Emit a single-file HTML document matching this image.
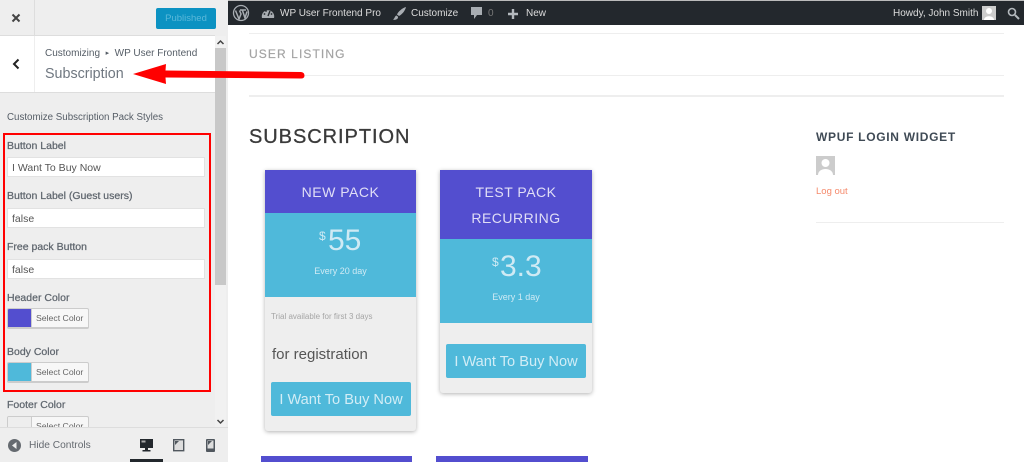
<!DOCTYPE html>
<html><head><meta charset="utf-8"><style>
html,body{margin:0;padding:0}
body{width:1024px;height:462px;overflow:hidden;background:#fff;position:relative;font-family:"Liberation Sans",sans-serif}
.a{position:absolute;white-space:nowrap}
.lbl{left:7px;font-size:10.5px;color:#5f666e;-webkit-text-stroke:.25px #5f666e}
.inp{left:7px;width:196px;height:18px;background:#fff;border:1px solid #e2e2e2;font-size:10.5px;line-height:20px;color:#555;text-indent:4px}
.sw{left:7px;width:80px;height:18px;background:#f7f7f7;border:1px solid #ccc;border-bottom-width:2px;border-radius:2px;font-size:8.7px;line-height:18px;color:#666;overflow:hidden}
.sw i{position:absolute;left:0;top:0;width:23px;height:18px;border-right:1px solid #ccc}
.sw span{position:absolute;left:28px}
.card{position:absolute;background:#eee;border-radius:0 0 3px 3px;box-shadow:0 1px 4px rgba(0,0,0,.3)}
.hd{position:absolute;left:0;right:0;top:0;background:#534ecf;color:#e0def6;text-align:center;font-size:14px;letter-spacing:.5px;line-height:26px}
.bd{position:absolute;left:0;right:0;background:#4fb9da;color:#cfeaf4;text-align:center}
.btn{position:absolute;background:#4fb9da;color:#d2edf6;border-radius:2px;text-align:center;font-size:14.6px;line-height:36px;width:140px;height:34px}
.line{position:absolute;background:#eee;height:1px}
</style></head><body>
<!-- main -->
<div class="a" style="left:228px;top:0;width:796px;height:1px;background:#bbb"></div>
<div class="a" style="left:228px;top:1px;width:796px;height:24px;background:#23282d"></div>
<svg class="a" style="left:232px;top:4px" width="18" height="18" viewBox="0 0 18 18"><circle cx="9" cy="9" r="7.5" fill="none" stroke="#a8adb2" stroke-width="1.3"/><path d="M3.5 6.5 7 15l2-5-1.5-3.5M8 6h6M10.5 6.500 13 14l2-6.500" fill="none" stroke="#a8adb2" stroke-width="1.500"/></svg>
<svg class="a" style="left:261px;top:7px" width="14" height="13" viewBox="0 0 14 13"><path d="M1 11A6.200 6.200 0 1 1 13 11Z" fill="#a8adb2"/><path d="M7 9 9 4" stroke="#23282d" stroke-width="1.400"/><circle cx="3.500" cy="7" r=".9" fill="#23282d"/><circle cx="5" cy="4" r=".9" fill="#23282d"/><circle cx="10.500" cy="7" r=".9" fill="#23282d"/></svg>
<div class="a" style="left:280px;top:7px;font-size:10px;color:#ddd;line-height:14px">WP User Frontend Pro</div>
<svg class="a" style="left:392px;top:6px" width="15" height="15" viewBox="0 0 15 15"><path d="M14 1C10 2 6 6 5 8.500L7 10C10 8.500 13 5 14 1ZM4.500 9.500C2.500 10 3 12.500 1 13.500 3.500 14.500 6.500 13 6 10.800Z" fill="#a8adb2"/></svg>
<div class="a" style="left:411px;top:7px;font-size:10px;color:#ddd;line-height:14px">Customize</div>
<svg class="a" style="left:470px;top:6px" width="13" height="14" viewBox="0 0 13 14"><path d="M1 1H12V9H7L4 13V9H1Z" fill="#a8adb2"/></svg>
<div class="a" style="left:488px;top:7px;font-size:10px;color:#777;line-height:14px">0</div>
<svg class="a" style="left:507px;top:8px" width="12" height="12" viewBox="0 0 12 12"><path d="M6 1V11M1 6H11" stroke="#b4b9be" stroke-width="2.400"/></svg>
<div class="a" style="left:526px;top:7px;font-size:10px;color:#ddd;line-height:14px">New</div>
<div class="a" style="left:893px;top:7px;font-size:10px;color:#ddd;line-height:14px">Howdy, John Smith</div>
<svg class="a" style="left:982px;top:6px" width="14" height="14" viewBox="0 0 14 14"><rect width="14" height="14" fill="#ccc"/><circle cx="7" cy="5" r="3" fill="#fff"/><path d="M2 14C2 9 12 9 12 14Z" fill="#fff"/></svg>
<svg class="a" style="left:1007px;top:7px" width="13" height="13" viewBox="0 0 13 13"><circle cx="5" cy="5" r="3.500" fill="none" stroke="#b4b9be" stroke-width="1.600"/><path d="M8 8 12 12" stroke="#b4b9be" stroke-width="2"/></svg>

<div class="line" style="left:249px;top:33px;width:755px"></div>
<div class="a" style="left:249px;top:47px;font-size:12px;line-height:14px;letter-spacing:1.100px;color:#a3a3a3;-webkit-text-stroke:.2px #a3a3a3">USER LISTING</div>
<div class="line" style="left:249px;top:75px;width:755px"></div>
<div class="line" style="left:249px;top:95px;width:755px;height:2px"></div>
<div class="a" style="left:249px;top:123px;font-size:20px;line-height:28px;letter-spacing:.95px;color:#3a3a3a;-webkit-text-stroke:.3px #3a3a3a">SUBSCRIPTION</div>

<div class="card" style="left:265px;top:170px;width:151px;height:261px">
 <div class="hd" style="height:43px;line-height:44px">NEW PACK</div>
 <div class="bd" style="top:43px;height:84px">
  <div class="a" style="left:54px;top:16px;font-size:12px">$</div>
  <div class="a" style="left:63px;top:10px;font-size:30px;line-height:36px">55</div>
  <div class="a" style="left:0;right:0;top:52px;font-size:9px;line-height:12px">Every 20 day</div>
 </div>
 <div class="a" style="left:6px;top:141px;font-size:8px;line-height:11px;color:#a5a5a5">Trial available for first 3 days</div>
 <div class="a" style="left:7px;top:175px;font-size:15px;line-height:19px;color:#555">for registration</div>
 <div class="btn" style="left:6px;top:212px">I Want To Buy Now</div>
</div>
<div class="card" style="left:440px;top:170px;width:152px;height:223px">
 <div class="hd" style="padding-top:9px;height:60px">TEST PACK<br>RECURRING</div>
 <div class="bd" style="top:69px;height:84px">
  <div class="a" style="left:52px;top:16px;font-size:12px">$</div>
  <div class="a" style="left:60px;top:10px;font-size:30px;line-height:36px">3.3</div>
  <div class="a" style="left:0;right:0;top:52px;font-size:9px;line-height:12px">Every 1 day</div>
 </div>
 <div class="btn" style="left:6px;top:174px">I Want To Buy Now</div>
</div>
<div class="a" style="left:261px;top:456px;width:151px;height:6px;background:#534ecf"></div>
<div class="a" style="left:436px;top:456px;width:152px;height:6px;background:#534ecf"></div>

<div class="a" style="left:816px;top:130px;font-size:12px;line-height:14px;letter-spacing:.7px;font-weight:bold;color:#3f4a55">WPUF LOGIN WIDGET</div>
<svg class="a" style="left:816px;top:156px" width="19" height="19" viewBox="0 0 19 19"><rect width="19" height="19" fill="#ccc"/><circle cx="9.500" cy="7" r="4" fill="#fff"/><path d="M2 19C2 11 17 11 17 19Z" fill="#fff"/></svg>
<div class="a" style="left:816px;top:185px;font-size:9.500px;line-height:14px;color:#f58a6c">Log out</div>
<div class="line" style="left:816px;top:222px;width:188px"></div>

<!-- panel -->
<div class="a" style="left:0;top:0;width:228px;height:462px;background:#eee"></div>
<div class="a" style="left:0;top:35px;width:215px;height:1px;background:#ddd"></div>
<div class="a" style="left:34px;top:0;width:1px;height:35px;background:#ddd"></div>
<svg class="a" style="left:11px;top:13px" width="10" height="10" viewBox="0 0 10 10"><path d="M1.500 1.500 8.500 8.500M8.500 1.500 1.500 8.500" stroke="#444" stroke-width="2"/></svg>
<div class="a" style="left:156px;top:8px;width:60px;height:21px;background:#0c92c2;border-radius:2px;color:#5ab8da;font-size:9.500px;line-height:21px;text-align:center">Published</div>
<div class="a" style="left:0;top:36px;width:215px;height:56px;background:#fff;border-bottom:1px solid #ddd"></div>
<div class="a" style="left:34px;top:36px;width:1px;height:56px;background:#eee"></div>
<svg class="a" style="left:11px;top:58px" width="10" height="12" viewBox="0 0 10 12"><path d="M7.500 1.500 3 6 7.500 10.500" fill="none" stroke="#222" stroke-width="2"/></svg>
<div class="a" style="left:45px;top:47px;font-size:10px;line-height:14px;color:#555d66">Customizing &nbsp;<span style="font-size:7px;vertical-align:1px">▸</span>&nbsp; WP User Frontend</div>
<div class="a" style="left:45px;top:65px;font-size:14.300px;line-height:19px;color:#6f7780">Subscription</div>
<div class="a" style="left:7px;top:111px;font-size:9.750px;line-height:14px;color:#555d66">Customize Subscription Pack Styles</div>

<div class="a lbl" style="top:139px;line-height:14px">Button Label</div>
<div class="a inp" style="top:157px">I Want To Buy Now</div>
<div class="a lbl" style="top:189px;line-height:14px">Button Label (Guest users)</div>
<div class="a inp" style="top:208px">false</div>
<div class="a lbl" style="top:240px;line-height:14px">Free pack Button</div>
<div class="a inp" style="top:259px">false</div>
<div class="a lbl" style="top:291px;line-height:14px">Header Color</div>
<div class="a sw" style="top:308px"><i style="background:#534ecf"></i><span>Select Color</span></div>
<div class="a lbl" style="top:345px;line-height:14px">Body Color</div>
<div class="a sw" style="top:362px"><i style="background:#4fb9da"></i><span>Select Color</span></div>
<div class="a lbl" style="top:398px;line-height:14px">Footer Color</div>
<div class="a sw" style="top:416px"><i style="background:#eee"></i><span>Select Color</span></div>

<div class="a" style="left:3px;top:133px;width:204px;height:255px;border:2px solid #f00"></div>

<div class="a" style="left:215px;top:36px;width:11px;height:391px;background:#f1f1f1"></div>
<div class="a" style="left:215px;top:48px;width:11px;height:237px;background:#c8c8c8"></div>
<svg class="a" style="left:216px;top:39px" width="9" height="7" viewBox="0 0 9 7"><path d="M1.500 5 4.500 2 7.500 5" fill="none" stroke="#444" stroke-width="1.500"/></svg>
<svg class="a" style="left:216px;top:418px" width="9" height="7" viewBox="0 0 9 7"><path d="M1.500 2 4.500 5 7.500 2" fill="none" stroke="#444" stroke-width="1.500"/></svg>

<div class="a" style="left:0;top:427px;width:228px;height:35px;background:#eee;border-top:1px solid #ddd;box-sizing:border-box"></div>
<svg class="a" style="left:8px;top:439px" width="13" height="13" viewBox="0 0 13 13"><circle cx="6.500" cy="6.500" r="6.500" fill="#656a70"/><path d="M8.500 3V10L4 6.500Z" fill="#eee"/></svg>
<div class="a" style="left:29px;top:439px;font-size:10.200px;line-height:14px;color:#656a70">Hide Controls</div>
<svg class="a" style="left:140px;top:439px" width="13" height="13" viewBox="0 0 13 13"><rect x="0" y="0" width="13" height="9" fill="#23282d"/><rect x="1.500" y="1.500" width="4" height="2" fill="#aaa"/><path d="M5 9H8V11H10.500V12.500H2.500V11H5Z" fill="#23282d"/></svg>
<svg class="a" style="left:173px;top:439px" width="12" height="13" viewBox="0 0 12 13"><rect x=".7" y=".7" width="10" height="11" fill="#ddd" stroke="#50575e" stroke-width="1.400"/><path d="M2 2H6L2 6Z" fill="#50575e"/></svg>
<svg class="a" style="left:206px;top:439px" width="9" height="13" viewBox="0 0 9 13"><rect width="9" height="13" rx="1" fill="#50575e"/><rect x="1.500" y="1.500" width="6" height="8" fill="#ddd"/><path d="M2 2H6L2 6Z" fill="#50575e"/></svg>
<div class="a" style="left:130px;top:459px;width:33px;height:3px;background:#23282d"></div>

<!-- arrow -->
<svg class="a" style="left:0;top:0" width="400" height="100" viewBox="0 0 400 100"><path d="M133 74 166 64 165.500 70.500 301 72Q304.500 72.500 304.500 75.500 304.500 78.500 301 78.500L165.500 77.500 166 84Z" fill="#f00"/></svg>
</body></html>
